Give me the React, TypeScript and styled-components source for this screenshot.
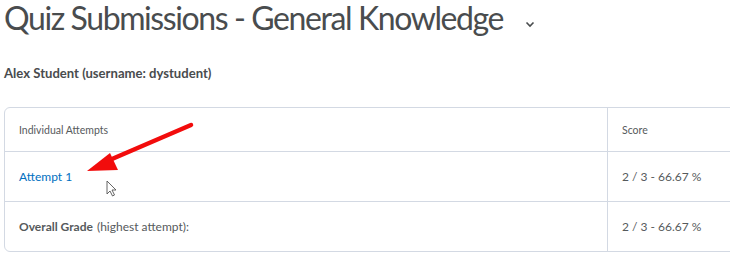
import styled, { createGlobalStyle } from 'styled-components';

const GlobalStyle = createGlobalStyle`
  html, body {
    margin: 0;
    padding: 0;
    background: #fff;
    overflow: hidden;
  }
  body {
    font-family: Lato, 'Open Sans', sans-serif;
    color: #494c4e;
  }
`;

const Page = styled.div`
  position: relative;
  width: 730px;
  height: 257px;
  padding-left: 4px;
  box-sizing: border-box;
  overflow: hidden;
`;

const TitleRow = styled.div`
  display: flex;
  align-items: center;
  gap: 20px;
  height: 36px;
`;

const Title = styled.h1`
  flex-shrink: 0;
  margin: 0;
  padding-right: 2px;
  font-size: 32px;
  line-height: 36px;
  font-weight: 400;
  letter-spacing: -1.4px;
  color: #494c4e;
  white-space: nowrap;
`;

const Chevron = styled.svg`
  width: 10px;
  height: 7px;
  margin-top: 12px;
`;

const UserName = styled.div`
  margin-top: 29px;
  font-size: 13.1px;
  line-height: 17px;
  font-weight: 700;
  color: #494c4e;
`;

const Table = styled.div`
  margin-top: 25px;
  width: 800px;
  border: 1px solid #d3d9e3;
  border-radius: 6px;
  overflow: hidden;
`;

const Row = styled.div<{ $h: number; $last?: boolean }>`
  display: grid;
  grid-template-columns: 602px 1fr;
  height: ${({ $h }) => $h}px;
  border-bottom: ${({ $last }) => ($last ? 'none' : '1px solid #d3d9e3')};
  box-sizing: border-box;
`;

const Cell = styled.div<{ $head?: boolean }>`
  display: flex;
  align-items: center;
  padding-left: 14px;
  font-size: ${({ $head }) => ($head ? '10.5px' : '12px')};
  color: #565a5c;
  & + & {
    border-left: 1px solid #d3d9e3;
  }
`;

const Link = styled.a`
  color: #006fbf;
  text-decoration: none;
  font-size: 12px;
`;

const Strong = styled.b`
  font-weight: 700;
  margin-right: 4px;
`;

const Overlay = styled.svg`
  position: absolute;
  left: 0;
  top: 0;
  pointer-events: none;
`;

export default function App() {
  return (
    <>
      <GlobalStyle />
      <Page>
        <TitleRow>
          <Title>Quiz Submissions - General Knowledge</Title>
          <Chevron viewBox="0 0 10 7">
            <polyline points="1.5,1.5 5,5 8.5,1.5" fill="none" stroke="#494c4e" strokeWidth="1.6" />
          </Chevron>
        </TitleRow>
        <UserName>Alex Student (username: dystudent)</UserName>
        <Table>
          <Row $h={44}>
            <Cell $head>Individual Attempts</Cell>
            <Cell $head>Score</Cell>
          </Row>
          <Row $h={50}>
            <Cell>
              <Link href="#">Attempt 1</Link>
            </Cell>
            <Cell>2 / 3 - 66.67 %</Cell>
          </Row>
          <Row $h={49} $last>
            <Cell>
              <Strong>Overall Grade</Strong>(highest attempt):
            </Cell>
            <Cell>2 / 3 - 66.67 %</Cell>
          </Row>
        </Table>
        <Overlay width="730" height="257" viewBox="0 0 730 257">
          <line x1="191" y1="125" x2="105" y2="162" stroke="#f20c0c" strokeWidth="4.5" strokeLinecap="round" />
          <polygon points="87,171 110,153 118,170" fill="#f20c0c" />
          <path
            d="M107 181 L107 194 L110 191 L112.5 196 L114.5 195 L112 190 L116 190 Z"
            fill="#fff"
            stroke="#555"
            strokeWidth="0.9"
            strokeLinejoin="round"
          />
        </Overlay>
      </Page>
    </>
  );
}
